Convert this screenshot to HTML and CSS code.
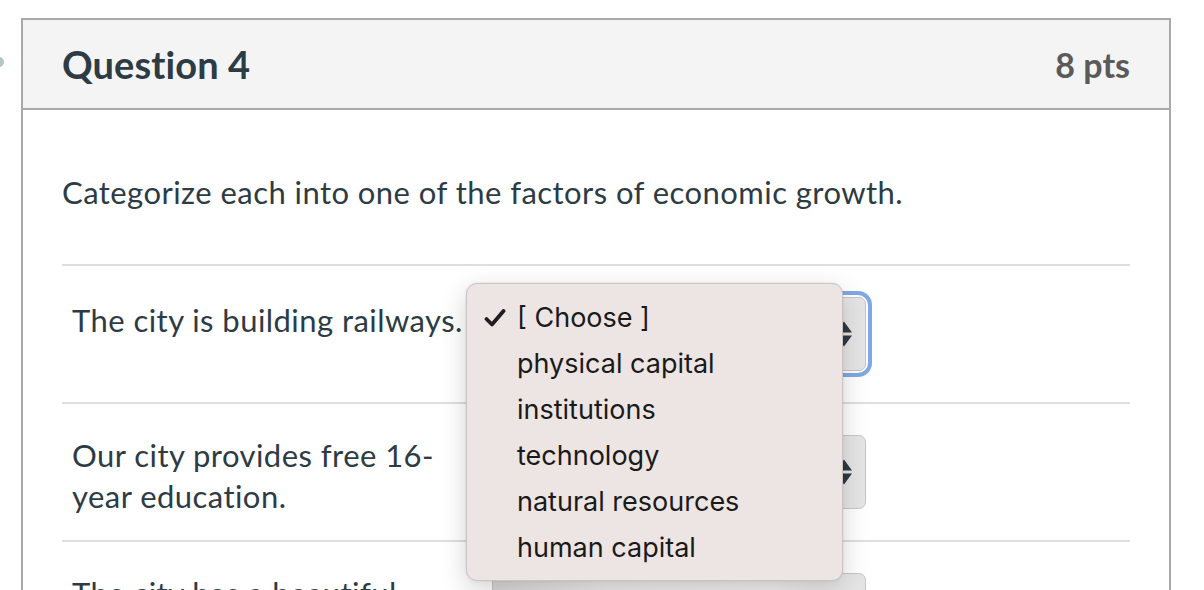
FILE: index.html
```
<!DOCTYPE html>
<html>
<head>
<meta charset="utf-8">
<link rel="stylesheet" href="styles.css">
</head>
<body>
<div class="page">
  <div class="side-dot"></div>
  <div class="card">
    <div class="card-header">
      <div class="q-title">Question 4</div>
      <div class="q-pts">8 pts</div>
    </div>
    <div class="card-body">
      <p class="prompt">Categorize each into one of the factors of economic growth.</p>
      <div class="match-list">
        <div class="match-row">
          <div class="match-text first">The city is building railways.</div>
          <div class="select-wrap focused">
            <div class="select-box"><span class="arrows"><i class="up"></i><i class="down"></i></span></div>
          </div>
          <div class="menu">
            <div class="menu-item checked"><svg class="check" viewBox="0 0 22 20" width="22" height="20"><path d="M2.5 11 L8 16.5 L19.5 3" fill="none" stroke="#1e1e1e" stroke-width="3.8" stroke-linecap="round" stroke-linejoin="round"/></svg><span>[ Choose ]</span></div>
            <div class="menu-item"><span>physical capital</span></div>
            <div class="menu-item"><span>institutions</span></div>
            <div class="menu-item"><span>technology</span></div>
            <div class="menu-item"><span>natural resources</span></div>
            <div class="menu-item"><span>human capital</span></div>
          </div>
        </div>
        <div class="match-row">
          <div class="match-text">Our city provides free 16-year education.</div>
          <div class="select-wrap">
            <div class="select-box"><span class="arrows"><i class="up"></i><i class="down"></i></span></div>
          </div>
        </div>
        <div class="match-row">
          <div class="match-text">The city has a beautiful landscape.</div>
          <div class="select-wrap">
            <div class="select-box"><span class="arrows"><i class="up"></i><i class="down"></i></span></div>
          </div>
        </div>
      </div>
    </div>
  </div>
</div>
</body>
</html>
```
FILE: styles.css
```
html, body {
  margin: 0;
  padding: 0;
  background: #ffffff;
  overflow: hidden;
}
body {
  font-family: Lato, "Open Sans", sans-serif;
  color: #2d3b45;
}
.page {
  display: flex;
  align-items: flex-start;
  padding: 18px 0 0 0;
  height: 572px;
  overflow: hidden;
}
.side-dot {
  width: 10px;
  height: 10px;
  border-radius: 50%;
  background: #9fb8b4;
  margin: 39px 0 0 -6px;
  flex: none;
  opacity: 0.8;
}
.card {
  margin-left: 17px;
  width: 1150px;
  box-sizing: border-box;
  border: 2px solid #a9a9a9;
  border-bottom: none;
  flex: none;
}
.card-header {
  display: flex;
  justify-content: space-between;
  align-items: center;
  height: 90px;
  box-sizing: border-box;
  padding: 0 39px 0 39px;
  background: #f4f4f4;
  border-bottom: 2px solid #a9a9a9;
}
.q-title {
  font-size: 38px;
  font-weight: 700;
  color: #2d3b45;
  letter-spacing: 0.1px;
}
.q-pts {
  font-size: 34px;
  font-weight: 700;
  color: #5a5a5a;
}
.card-body {
  padding: 0 39px;
}
.prompt {
  margin: 0;
  padding: 61px 0 50px 0;
  font-size: 31px;
  letter-spacing: 0.45px;
  line-height: 43px;
  border-bottom: 2px solid #dedede;
}
.match-row {
  position: relative;
  display: flex;
  align-items: flex-start;
  height: 138px;
  padding: 31px 0 0 10px;
  box-sizing: border-box;
  border-bottom: 2px solid #dedede;
}
.match-text {
  width: 405px;
  font-size: 31px;
  letter-spacing: 0.45px;
  line-height: 41px;
  flex: none;
}
.match-text.first {
  padding-top: 3px;
}
.select-wrap {
  margin-left: 15px;
  width: 374px;
  height: 74px;
  border-radius: 8px;
  flex: none;
}
.select-wrap.focused {
  box-shadow: 0 0 0 2px #ffffff, 0 0 0 6px #80a8e6;
}
.select-box {
  position: relative;
  height: 100%;
  box-sizing: border-box;
  border: 1.5px solid #c6c6c6;
  border-radius: 7px;
  background: linear-gradient(to right, #d9d9d9 0%, #ececec 30%, #f1f1f1 75%, #e4e4e4 100%);
}
.arrows {
  position: absolute;
  right: 13px;
  top: 50%;
  transform: translateY(-50%);
  display: flex;
  flex-direction: column;
  gap: 3px;
}
.arrows i {
  display: block;
  width: 0;
  height: 0;
  border-left: 8px solid transparent;
  border-right: 8px solid transparent;
}
.arrows .up {
  border-bottom: 11px solid #2e3a42;
}
.arrows .down {
  border-top: 11px solid #2e3a42;
}
.menu {
  position: absolute;
  left: 404px;
  top: 17px;
  width: 377px;
  box-sizing: border-box;
  padding: 10px 0 10px 0;
  background: #ede5e3;
  border: 1px solid #cbc3c1;
  border-radius: 11px;
  box-shadow: 0 8px 26px rgba(0, 0, 0, 0.18), 0 0 3px rgba(0, 0, 0, 0.08);
  font-family: Inter, Roboto, "Noto Sans", sans-serif;
  font-size: 27px;
  color: #1a1a1a;
  z-index: 5;
}
.menu-item {
  display: flex;
  align-items: center;
  height: 46px;
  padding-left: 50px;
  position: relative;
}
.check {
  position: absolute;
  left: 17px;
  top: 14px;
}
```
